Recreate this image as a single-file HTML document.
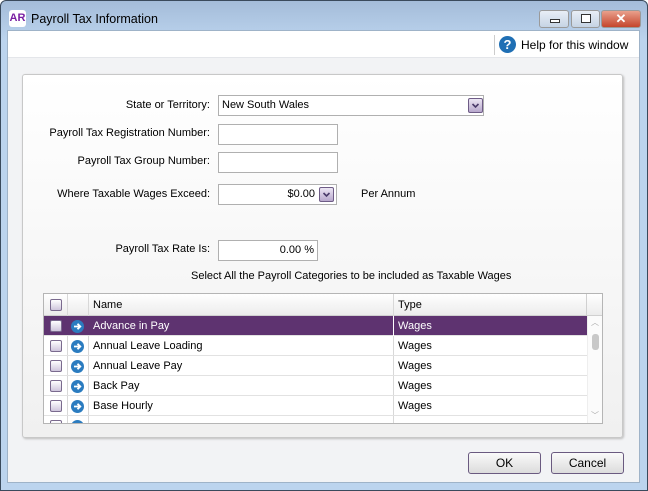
<!DOCTYPE html>
<html><head><style>
*{margin:0;padding:0;box-sizing:border-box}
body{width:648px;height:491px;overflow:hidden;font-family:"Liberation Sans",sans-serif;font-size:11px;color:#000;background:#fff}
.win{position:absolute;left:0;top:0;width:648px;height:491px;border:1px solid #3a4a5c;border-radius:6px 6px 0 0;background:linear-gradient(#a4bcd9,#bcd4ee 40px);}
.abs{position:absolute}
.content{left:7px;top:30px;width:633px;height:453px;background:#f2f3f5;border:1px solid #9fb3c8}
.tool{left:8px;top:31px;width:631px;height:27px;background:#fff;border-bottom:1px solid #e4e6ea}
.panel{left:22px;top:74px;width:601px;height:364px;border:1px solid #c8c8c8;border-radius:3px;background:linear-gradient(#fff,#f0f0f0);box-shadow:1px 1px 2px #bbb}
.lbl{text-align:right;width:200px}
.inp{background:#fff;border:1px solid #b0b0b0;height:21px}
.dd{width:15px;height:15px;border:1px solid #6e5c86;border-radius:2px;background:linear-gradient(#ece6f4,#b8a8cc)}
.tb{border:1px solid #9a9a9a;border-radius:3px;height:18px;top:9px}
.cb{width:12px;height:12px;border:1px solid #7a6a8e;border-radius:2px;background:linear-gradient(#fff,#cfc6dc)}
.arr{width:13px;height:13px;border-radius:50%;background:#2b7cc0}
.row{position:absolute;left:0;width:543px;height:20px;border-bottom:1px solid #e2e2e2}
.btn{top:452px;width:73px;height:22px;border:1px solid #6a5a80;border-radius:3px;background:linear-gradient(#fafafa,#dcdcdc);text-align:center;line-height:20px;font-size:12px}
</style></head><body>
<svg width="0" height="0" style="position:absolute"><defs>
<symbol id="a" viewBox="0 0 13 13"><circle cx="6.5" cy="6.5" r="6.5" fill="#2b7cc0"/><path d="M3 6.5h6M6.5 3.8l2.8 2.7-2.8 2.7" stroke="#fff" stroke-width="1.8" fill="none"/></symbol>
<symbol id="v" viewBox="0 0 13 13"><path d="M3.5 5l3 3 3-3" stroke="#4a3a6a" stroke-width="1.6" fill="none"/></symbol>
</defs></svg>
<div class="win">
<div class="abs" style="left:8px;top:9px;width:17px;height:17px;background:#fff;border-radius:3px;color:#7a1fa2;font-weight:bold;font-size:11px;line-height:17px;text-align:center">AR</div>
<div class="abs" style="left:30px;top:11px;font-size:12.5px">Payroll Tax Information</div>
<div class="abs tb" style="left:538px;width:30px;background:linear-gradient(#e8eef6,#c6d4e4)"><div class="abs" style="left:10px;top:8px;width:10px;height:4px;border:1px solid #333;background:#fff"></div></div>
<div class="abs tb" style="left:570px;width:29px;background:linear-gradient(#e8eef6,#c6d4e4)"><div class="abs" style="left:9px;top:3px;width:10px;height:9px;border:1px solid #333;background:#fff"></div></div>
<div class="abs tb" style="left:600px;width:40px;background:linear-gradient(#e9a08c,#c4452c);color:#fff;font-weight:bold;text-align:center;line-height:16px;font-size:13px">✕</div>
</div>
<div class="abs content"></div>
<div class="abs tool">
<div class="abs" style="left:486px;top:4px;width:1px;height:20px;background:#ccc"></div>
<div class="abs" style="left:491px;top:5px;width:17px;height:17px;border-radius:50%;background:#1f6fb4;color:#fff;font-weight:bold;text-align:center;line-height:17px;font-size:13px">?</div>
<div class="abs" style="left:513px;top:7px;font-size:12px">Help for this window</div>
</div>
<div class="abs panel"></div>
<div class="abs lbl" style="left:10px;top:99px">State or Territory:</div>
<div class="abs inp" style="left:218px;top:95px;width:266px"><span class="abs" style="left:3px;top:3px">New South Wales</span><div class="abs dd" style="left:249px;top:2px"><svg width="13" height="13" style="display:block"><use href="#v"/></svg></div></div>
<div class="abs lbl" style="left:10px;top:127px">Payroll Tax Registration Number:</div>
<div class="abs inp" style="left:218px;top:124px;width:120px"></div>
<div class="abs lbl" style="left:10px;top:155px">Payroll Tax Group Number:</div>
<div class="abs inp" style="left:218px;top:152px;width:120px"></div>
<div class="abs lbl" style="left:10px;top:188px">Where Taxable Wages Exceed:</div>
<div class="abs inp" style="left:218px;top:184px;width:119px"><span class="abs" style="right:21px;top:3px">$0.00</span><div class="abs dd" style="left:100px;top:2px"><svg width="13" height="13" style="display:block"><use href="#v"/></svg></div></div>
<div class="abs" style="left:361px;top:188px">Per Annum</div>
<div class="abs lbl" style="left:10px;top:243px">Payroll Tax Rate Is:</div>
<div class="abs inp" style="left:218px;top:240px;width:100px"><span class="abs" style="right:3px;top:3px">0.00 %</span></div>
<div class="abs" style="left:191px;top:270px">Select All the Payroll Categories to be included as Taxable Wages</div>
<div class="abs" style="left:43px;top:293px;width:560px;height:131px;border:1px solid #b5b5b5;background:#fff;overflow:hidden">
<div class="abs" style="left:0;top:0;width:558px;height:22px;background:linear-gradient(#fff,#ececec);border-bottom:1px solid #d0d0d0"></div>
<div class="abs cb" style="left:6px;top:5px"></div>
<div class="abs" style="left:23px;top:0;width:1px;height:130px;background:#d8d8d8"></div>
<div class="abs" style="left:44px;top:0;width:1px;height:130px;background:#d8d8d8"></div>
<div class="abs" style="left:349px;top:0;width:1px;height:130px;background:#d8d8d8"></div>
<div class="abs" style="left:542px;top:0;width:1px;height:22px;background:#d0d0d0"></div>
<div class="abs" style="left:49px;top:5px">Name</div>
<div class="abs" style="left:354px;top:5px">Type</div>
<div class="row" style="top:22px;background:#5e3370;color:#fff"><div class="abs cb" style="left:6px;top:4px"></div><svg class="abs" style="left:27px;top:4px" width="13" height="13"><use href="#a"/></svg><span class="abs" style="left:49px;top:4px">Advance in Pay</span><div class="abs" style="left:349px;top:0;width:1px;height:20px;background:#fff"></div><span class="abs" style="left:354px;top:4px">Wages</span></div>
<div class="row" style="top:42px"><div class="abs cb" style="left:6px;top:4px"></div><svg class="abs" style="left:27px;top:4px" width="13" height="13"><use href="#a"/></svg><span class="abs" style="left:49px;top:4px">Annual Leave Loading</span><span class="abs" style="left:354px;top:4px">Wages</span></div>
<div class="row" style="top:62px"><div class="abs cb" style="left:6px;top:4px"></div><svg class="abs" style="left:27px;top:4px" width="13" height="13"><use href="#a"/></svg><span class="abs" style="left:49px;top:4px">Annual Leave Pay</span><span class="abs" style="left:354px;top:4px">Wages</span></div>
<div class="row" style="top:82px"><div class="abs cb" style="left:6px;top:4px"></div><svg class="abs" style="left:27px;top:4px" width="13" height="13"><use href="#a"/></svg><span class="abs" style="left:49px;top:4px">Back Pay</span><span class="abs" style="left:354px;top:4px">Wages</span></div>
<div class="row" style="top:102px"><div class="abs cb" style="left:6px;top:4px"></div><svg class="abs" style="left:27px;top:4px" width="13" height="13"><use href="#a"/></svg><span class="abs" style="left:49px;top:4px">Base Hourly</span><span class="abs" style="left:354px;top:4px">Wages</span></div>
<div class="abs cb" style="left:6px;top:126px"></div><div class="abs arr" style="left:27px;top:126px"></div>
<div class="abs" style="left:543px;top:22px;width:16px;height:108px;background:#fbfbfb;border-left:1px solid #eee"><div class="abs" style="left:4px;top:18px;width:7px;height:16px;border-radius:3px;background:#c8c8c8"></div><div class="abs" style="left:3px;top:1px;font-size:8px;color:#aaa">︿</div><div class="abs" style="left:3px;top:94px;font-size:8px;color:#aaa">﹀</div></div>
</div>
<div class="abs btn" style="left:468px">OK</div>
<div class="abs btn" style="left:551px">Cancel</div>
</body></html>
